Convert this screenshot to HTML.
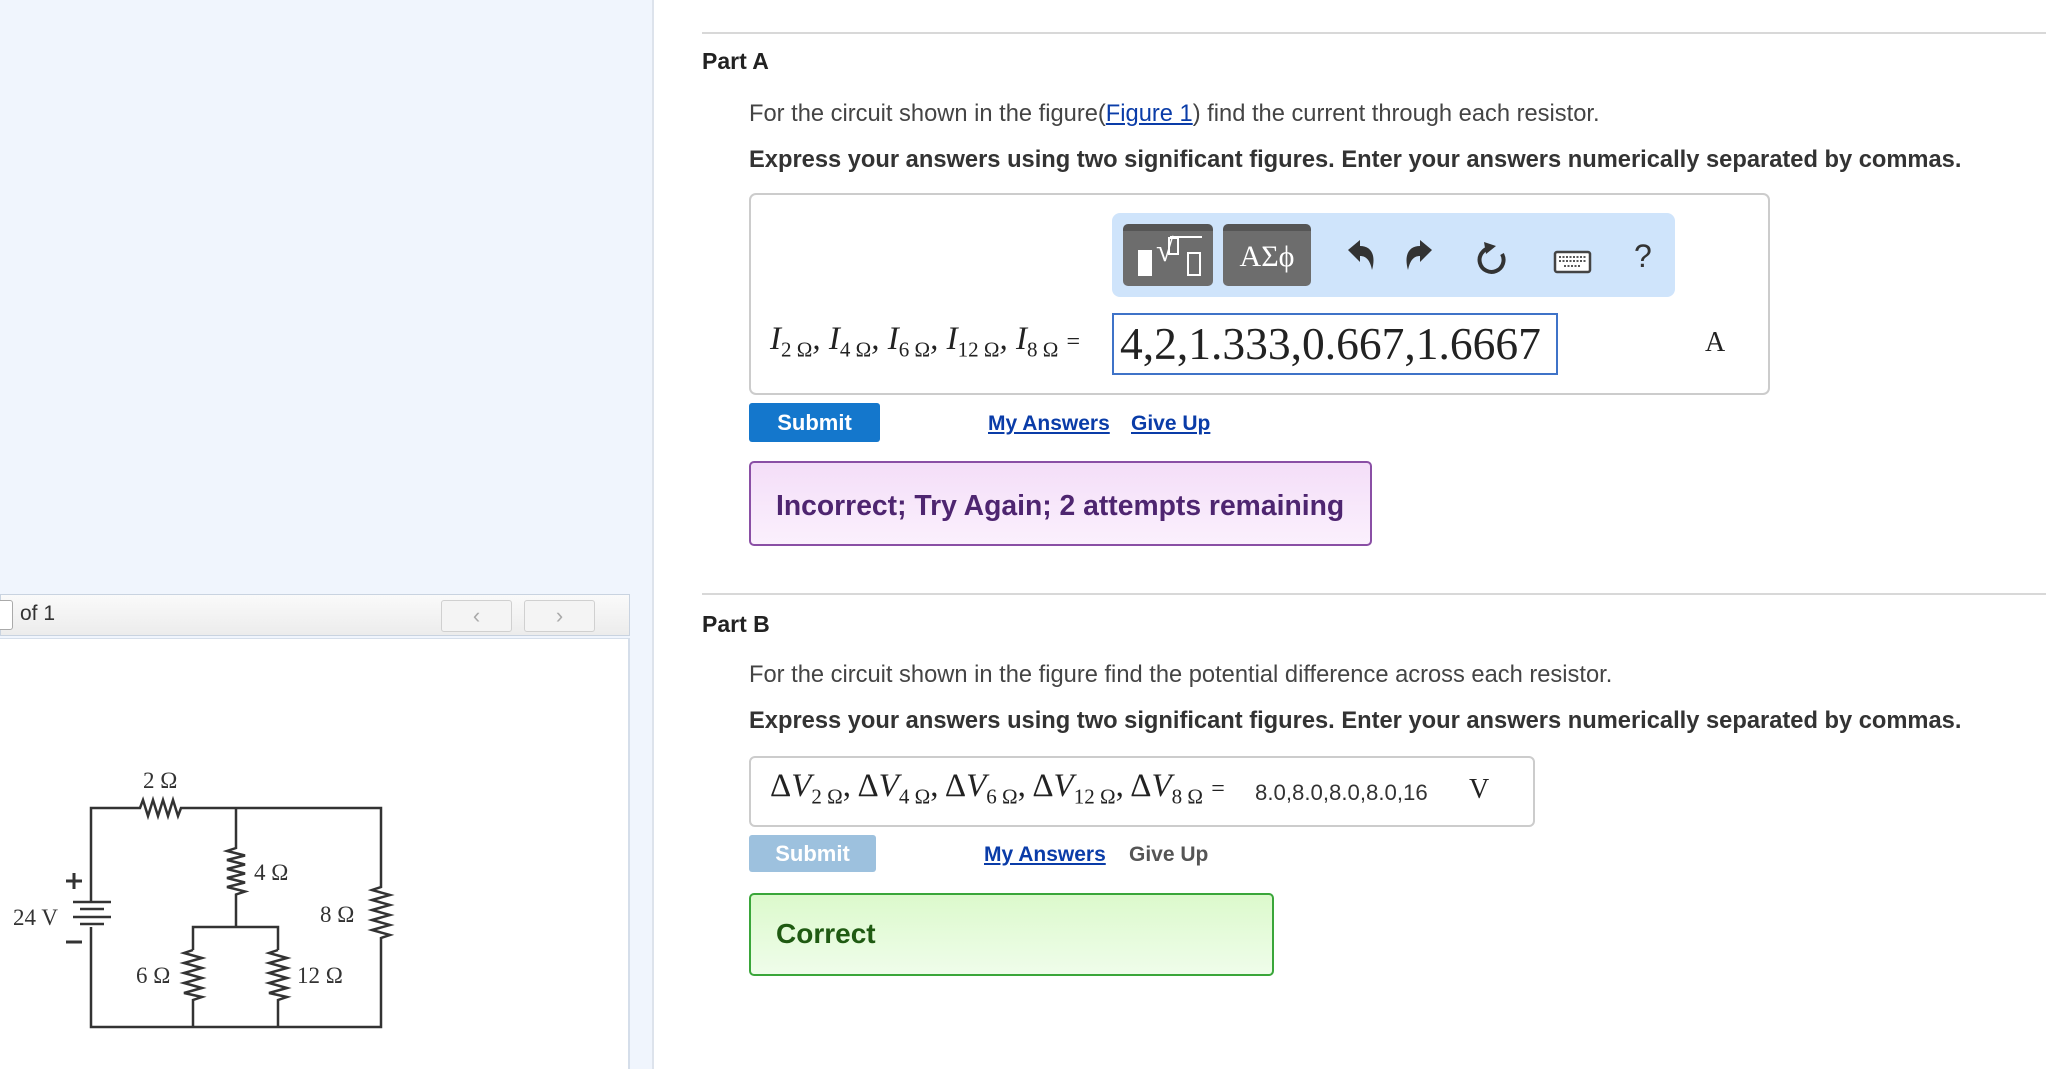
<!DOCTYPE html>
<html><head><meta charset="utf-8"><style>
*{margin:0;padding:0;box-sizing:border-box}
body{width:2046px;height:1069px;position:relative;background:#fff;font-family:"Liberation Sans",sans-serif;color:#333;overflow:hidden}
.a{position:absolute;white-space:nowrap}
.ser{font-family:"Liberation Serif",serif}
a{color:#0a3ca8}
sub{font-style:normal}
</style></head><body>
<div class="a" style="left:0;top:0;width:653px;height:1069px;background:#f0f5fd"></div>
<div class="a" style="left:652px;top:0;width:2px;height:1069px;background:#dde3ec"></div>
<!-- left toolbar -->
<div class="a" style="left:0;top:594px;width:630px;height:42px;background:linear-gradient(#fafafa,#ececec);border:1px solid #c9d3e0"></div>
<div class="a" style="left:-6px;top:600px;width:19px;height:30px;background:#fff;border:1px solid #aaa;border-radius:3px"></div>
<div class="a" style="left:20px;top:602px;font-size:21px;color:#333">of 1</div>
<div class="a" style="left:441px;top:600px;width:71px;height:32px;border:1px solid #d0d0d0;border-radius:3px;background:#f4f4f4;color:#aaa;text-align:center;font-size:22px;line-height:30px">&#8249;</div>
<div class="a" style="left:524px;top:600px;width:71px;height:32px;border:1px solid #d0d0d0;border-radius:3px;background:#f4f4f4;color:#aaa;text-align:center;font-size:22px;line-height:30px">&#8250;</div>
<div class="a" style="left:0;top:638px;width:630px;height:431px;background:#fff;border-right:2px solid #d5deea;border-top:1px solid #d5deea"></div>
<svg class="a" style="left:0;top:0" width="420" height="1069" viewBox="0 0 420 1069">
<g fill="none" stroke="#333" stroke-width="2.5">
<path d="M91 902 V808 H140 l3 -8 l5 16 l5 -16 l5 16 l5 -16 l5 16 l5 -16 l5 16 l3 -8 H381 V887 l-9 3 l18 5 l-18 5 l18 5 l-18 5 l18 5 l-18 5 l18 5 l-18 5 l18 5 l-9 3 V1027 H91 V927"/>
<path d="M236 808 V848 l-9 3 l18 4.5 l-18 4.5 l18 4.5 l-18 4.5 l18 4.5 l-18 4.5 l18 4.5 l-18 4.5 l18 4.5 l-9 3 V927"/>
<path d="M193 950 V927 H278 V950"/>
<path d="M193 950 l-9 3 l18 5 l-18 5 l18 5 l-18 5 l18 5 l-18 5 l18 5 l-18 5 l18 4 l-9 3 V1027"/>
<path d="M278 950 l-9 3 l18 5 l-18 5 l18 5 l-18 5 l18 5 l-18 5 l18 5 l-18 5 l18 4 l-9 3 V1027"/>
<path d="M73 902 H111 M80 909 H104 M73 917 H111 M80 924 H104"/>
<path d="M66 881 H82 M74 873 V889 M66 942 H82" stroke-width="3"/>
</g>
<g font-family="Liberation Serif,serif" font-size="23" fill="#333">
<text x="143" y="788">2 Ω</text>
<text x="254" y="880">4 Ω</text>
<text x="13" y="925">24 V</text>
<text x="320" y="922">8 Ω</text>
<text x="136" y="983">6 Ω</text>
<text x="297" y="983">12 Ω</text>
</g>
</svg>
<!-- Part A -->
<div class="a" style="left:702px;top:32px;width:1344px;height:2px;background:#d8d8d8"></div>
<div class="a" style="left:702px;top:48px;font-size:23px;font-weight:bold;color:#222">Part A</div>
<div class="a" style="left:749px;top:101px;font-size:23.7px;color:#444">For the circuit shown in the figure(<a href="#">Figure 1</a>) find the current through each resistor.</div>
<div class="a" style="left:749px;top:147px;font-size:23.7px;font-weight:bold;color:#333">Express your answers using two significant figures. Enter your answers numerically separated by commas.</div>
<div class="a" style="left:749px;top:193px;width:1021px;height:202px;border:2px solid #ccc;border-radius:7px"></div>
<div class="a" style="left:1112px;top:213px;width:563px;height:84px;background:#cfe4fb;border-radius:8px"></div>
<div class="a" style="left:1123px;top:224px;width:90px;height:62px;background:#6d6d6d;border-radius:5px;border-top:7px solid #555"></div>
<div class="a" style="left:1138px;top:250px;width:14px;height:26px;background:#fff"></div>
<div class="a ser" style="left:1156px;top:232px;color:#fff;font-size:32px">√</div>
<div class="a" style="left:1168px;top:237px;width:11px;height:18px;border:2px solid #fff"></div>
<div class="a" style="left:1170px;top:236px;width:32px;height:2px;background:#fff"></div>
<div class="a" style="left:1187px;top:252px;width:14px;height:24px;border:2px solid #fff"></div>
<div class="a ser" style="left:1223px;top:224px;width:88px;height:62px;background:#6d6d6d;border-radius:5px;border-top:7px solid #555;color:#fff;font-size:30px;text-align:center;line-height:52px">ΑΣϕ</div>
<svg class="a" style="left:1340px;top:236px" width="320" height="50" viewBox="0 0 320 50">
<g fill="#333">
<path d="M8 14 L20 4 V10 C32 10 36 20 32 34 C30 24 26 20 20 20 V26 Z"/>
<path d="M92 14 L80 4 V10 C68 10 64 20 68 34 C70 24 74 20 80 20 V26 Z"/>
</g>
<path d="M150 12 A12 12 0 1 0 162 18" fill="none" stroke="#333" stroke-width="4"/>
<path d="M144 6 L156 10 L146 18 Z" fill="#333"/>
<rect x="215" y="16" width="35" height="20" rx="2" fill="#fff" stroke="#444" stroke-width="2.5"/>
<g stroke="#555" stroke-width="2"><path d="M219 21 H246 M219 25 H246 M224 30 H241" stroke-dasharray="2 1.5"/></g>
</svg>
<div class="a" style="left:1634px;top:238px;font-size:32px;color:#333">?</div>
<div class="a ser" style="left:770px;top:321px;font-size:33px;font-style:italic;color:#222">I<sub style="font-size:21px">2 Ω</sub>, I<sub style="font-size:21px">4 Ω</sub>, I<sub style="font-size:21px">6 Ω</sub>, I<sub style="font-size:21px">12 Ω</sub>, I<sub style="font-size:21px">8 Ω</sub> <span style="font-style:normal;font-size:24px">=</span></div>
<div class="a ser" style="left:1112px;top:313px;width:446px;height:62px;border:2px solid #3f73c8;font-size:45.5px;color:#222;padding-left:6px;line-height:58px">4,2,1.333,0.667,1.6667</div>
<div class="a ser" style="left:1705px;top:327px;font-size:28px;color:#222">A</div>
<div class="a" style="left:749px;top:403px;width:131px;height:39px;background:#1477cc;border-radius:3px;color:#fff;font-weight:bold;font-size:22px;text-align:center;line-height:39px">Submit</div>
<div class="a" style="left:988px;top:412px;font-size:21px;font-weight:bold"><a href="#">My Answers</a></div>
<div class="a" style="left:1131px;top:412px;font-size:21px;font-weight:bold"><a href="#">Give Up</a></div>
<div class="a" style="left:749px;top:461px;width:623px;height:85px;border:2px solid #8a4fa5;border-radius:5px;background:linear-gradient(#f4def8,#fbf0fd);color:#4e2570;font-weight:bold;font-size:28.3px;padding:26px 0 0 25px">Incorrect; Try Again; 2 attempts remaining</div>
<!-- Part B -->
<div class="a" style="left:702px;top:593px;width:1344px;height:2px;background:#d8d8d8"></div>
<div class="a" style="left:702px;top:611px;font-size:23px;font-weight:bold;color:#222">Part B</div>
<div class="a" style="left:749px;top:662px;font-size:23.7px;color:#444">For the circuit shown in the figure find the potential difference across each resistor.</div>
<div class="a" style="left:749px;top:708px;font-size:23.7px;font-weight:bold;color:#333">Express your answers using two significant figures. Enter your answers numerically separated by commas.</div>
<div class="a" style="left:749px;top:756px;width:786px;height:71px;border:2px solid #ccc;border-radius:6px"></div>
<div class="a ser" style="left:770px;top:768px;font-size:33px;color:#222">Δ<i>V</i><sub style="font-size:21px">2 Ω</sub>, Δ<i>V</i><sub style="font-size:21px">4 Ω</sub>, Δ<i>V</i><sub style="font-size:21px">6 Ω</sub>, Δ<i>V</i><sub style="font-size:21px">12 Ω</sub>, Δ<i>V</i><sub style="font-size:21px">8 Ω</sub> <span style="font-size:24px">=</span></div>
<div class="a" style="left:1255px;top:780px;font-size:22.2px;color:#333">8.0,8.0,8.0,8.0,16</div>
<div class="a ser" style="left:1469px;top:774px;font-size:28px;color:#222">V</div>
<div class="a" style="left:749px;top:835px;width:127px;height:37px;background:#9dc1de;border-radius:3px;color:#fff;font-weight:bold;font-size:22px;text-align:center;line-height:37px">Submit</div>
<div class="a" style="left:984px;top:843px;font-size:21px;font-weight:bold"><a href="#">My Answers</a></div>
<div class="a" style="left:1129px;top:843px;font-size:21px;font-weight:bold;color:#555">Give Up</div>
<div class="a" style="left:749px;top:893px;width:525px;height:83px;border:2px solid #3aa63a;border-radius:5px;background:linear-gradient(#dcf9cc,#effdea);color:#1f5a12;font-weight:bold;font-size:28px;padding:23px 0 0 25px">Correct</div>
</body></html>
